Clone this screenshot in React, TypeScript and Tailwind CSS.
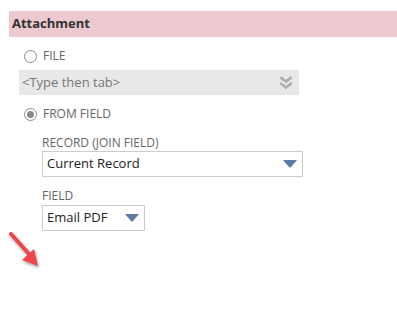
import React from 'react';

const Radio = ({ checked }: { checked?: boolean }) => (
  <span className="flex h-[13px] w-[13px] items-center justify-center rounded-full border border-[#8a8a8a] bg-white">
    {checked && <span className="h-[7px] w-[7px] rounded-full bg-[#8a8a8a]" />}
  </span>
);

const Caret = () => (
  <svg width="14" height="8" viewBox="0 0 14 8">
    <path d="M0 0 H14 L8 7 Q7 8 6 7 Z" fill="#5d7ba3" />
  </svg>
);

const DoubleChevron = () => (
  <svg width="14" height="14" viewBox="0 0 14 14" fill="none" stroke="#b0b0b0" strokeWidth="2.8" strokeLinecap="square">
    <path d="M2.5 2 L7 5.5 L11.5 2" />
    <path d="M2.5 8 L7 11.5 L11.5 8" />
  </svg>
);

const RedArrow = () => (
  <svg width="40" height="40" viewBox="0 0 40 40" style={{ filter: 'drop-shadow(1px 2px 1.5px rgba(0,0,0,0.35))' }}>
    <path d="M2 2 L21 23" stroke="#f0464a" strokeWidth="4" strokeLinecap="round" />
    <path d="M29 34 L13 28 L25 17 Z" fill="#f0464a" />
  </svg>
);

export default function App() {
  return (
    <div className="h-[334px] w-[397px] bg-white pt-[11px] pl-[9px] font-['Open_Sans',sans-serif]">
      <div className="flex h-[26px] items-center bg-[#ecc9ce] pl-[3px] text-[13px] font-bold text-[#333]">
        Attachment
      </div>

      <div className="mt-[10px] flex h-[18px] items-center gap-[6px] pl-[15px]">
        <Radio />
        <span className="text-[12px] text-[#666]">FILE</span>
      </div>

      <div className="mt-[5px] ml-[10px] flex h-[25px] w-[280px] items-center justify-between bg-[#e8e8e8] pl-[3px] pr-[6px]">
        <span className="text-[13px] text-[#777]">&lt;Type then tab&gt;</span>
        <DoubleChevron />
      </div>

      <div className="mt-[10px] flex h-[18px] items-center gap-[6px] pl-[15px]">
        <Radio checked />
        <span className="text-[12px] text-[#666]">FROM FIELD</span>
      </div>

      <div className="pl-[33px]">
        <div className="mt-[13px] text-[12px] leading-[14px] text-[#666]">RECORD (JOIN FIELD)</div>
        <div className="mt-[1px] flex h-[26px] w-[261px] items-center justify-between border border-[#cccccc] bg-white pl-[4px] pr-[5px]">
          <span className="text-[13px] text-[#222]">Current Record</span>
          <Caret />
        </div>

        <div className="mt-[12px] text-[12px] leading-[14px] text-[#666]">FIELD</div>
        <div className="mt-[2px] flex h-[26px] w-[103px] items-center justify-between border border-[#cccccc] bg-white pl-[4px] pr-[5px]">
          <span className="text-[13px] text-[#222]">Email PDF</span>
          <Caret />
        </div>
      </div>

      <div className="mt-[1px]">
        <RedArrow />
      </div>
    </div>
  );
}
